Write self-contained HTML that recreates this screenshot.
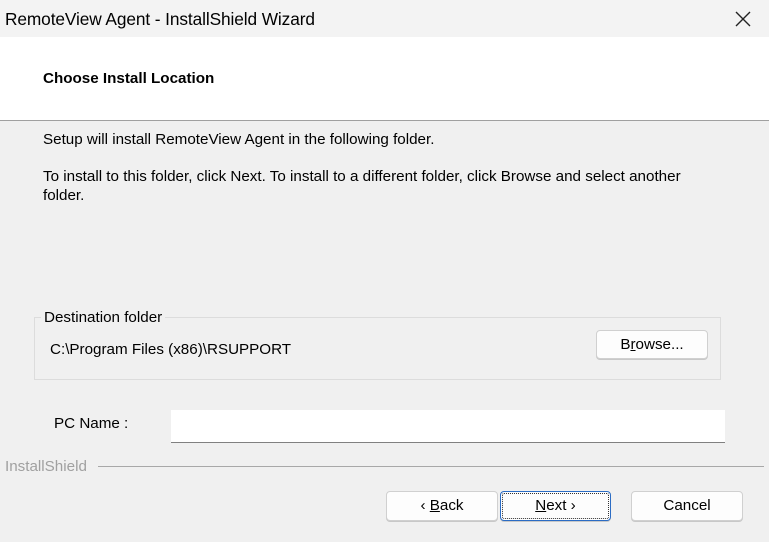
<!DOCTYPE html>
<html><head><style>
*{margin:0;padding:0;box-sizing:border-box}
body{width:769px;height:542px;background:#f0f0f0;font-family:"Liberation Sans",sans-serif;font-size:15.2px;color:#000;position:relative;overflow:hidden}
.a{position:absolute;white-space:nowrap}
.btn{position:absolute;background:#fdfdfd;border:1px solid #d0d0d0;border-radius:4px;text-align:center;font-size:15.2px;box-shadow:0 1px 0 #c8c8c8}
u{text-decoration:underline}
</style></head><body>
<div class="a" style="left:0;top:0;width:769px;height:37px;background:#f3f3f3"></div>
<div class="a" style="left:5px;top:9px;font-size:17.3px;letter-spacing:-0.1px">RemoteView Agent - InstallShield Wizard</div>
<svg class="a" style="left:735px;top:11px" width="16" height="16"><path d="M1 1L15 15M15 1L1 15" stroke="#222" stroke-width="1.4"/></svg>
<div class="a" style="left:0;top:37px;width:769px;height:83px;background:#fff"></div>
<div class="a" style="left:43px;top:70px;font-weight:bold;font-size:15.2px">Choose Install Location</div>
<div class="a" style="left:0;top:120px;width:769px;height:1px;background:#a0a0a0"></div>
<div class="a" style="left:43px;top:131px">Setup will install RemoteView Agent in the following folder.</div>
<div class="a" style="left:43px;top:167px;line-height:19px;white-space:normal;width:680px">To install to this folder, click Next. To install to a different folder, click Browse and select another folder.</div>
<div class="a" style="left:34px;top:317px;width:687px;height:63px;border:1px solid #dcdcdc"></div>
<div class="a" style="left:41px;top:309px;background:#f0f0f0;padding:0 3px">Destination folder</div>
<div class="a" style="left:50px;top:341px">C:\Program Files (x86)\RSUPPORT</div>
<div class="btn" style="left:596px;top:330px;width:112px;height:29px;line-height:27px">B<u>r</u>owse...</div>
<div class="a" style="left:54px;top:415px">PC Name :</div>
<div class="a" style="left:171px;top:410px;width:554px;height:33px;background:#fff;border-bottom:1px solid #808080"></div>
<div class="a" style="left:5px;top:458px;color:#a0a0a0">InstallShield</div>
<div class="a" style="left:98px;top:466px;width:666px;height:1px;background:#a8a8a8"></div>
<div class="btn" style="left:386px;top:491px;width:112px;height:30px;line-height:28px">‹ <u>B</u>ack</div>
<div class="btn" style="left:500px;top:491px;width:111px;height:30px;line-height:28px;border:1px solid #2b6cc4;outline:1px dotted #333;outline-offset:-3px"><u>N</u>ext ›</div>
<div class="btn" style="left:631px;top:491px;width:112px;height:30px;line-height:28px">Cancel</div>
</body></html>
